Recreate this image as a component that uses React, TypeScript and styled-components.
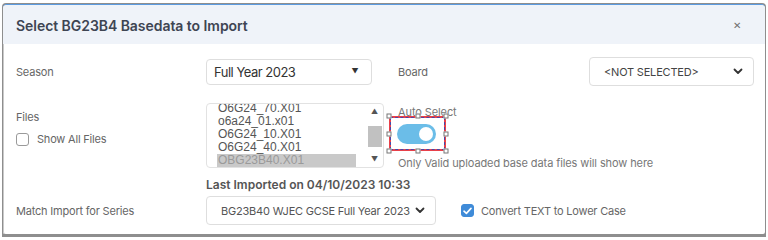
import React from "react";
import styled, { createGlobalStyle } from "styled-components";

const Global = createGlobalStyle`
  html, body { margin: 0; padding: 0; background: #ffffff; }
  body { font-family: Inter, "Noto Sans", sans-serif; }
  * { box-sizing: border-box; }
`;

const Backdrop = styled.div`
  width: 768px;
  height: 240px;
  background: #ffffff;
  padding: 3px 2px 0 2px;
  overflow: hidden;
`;

const Shade = styled.div`
  background: #8e8e8e;
  border-radius: 4px 4px 0 0;
  padding: 1px 1px 3px 1px;
  width: 764px;
`;

const Modal = styled.div`
  background: #ffffff;
  border-top: 1px solid #5b9be0;
  border-radius: 4px 4px 2px 2px;
  height: 230px;
  overflow: hidden;
  box-shadow: inset 1px 0 0 #c9c9c9;
`;

const Header = styled.div`
  height: 39px;
  background: #eff3f9;
  display: flex;
  align-items: center;
  justify-content: space-between;
  padding: 1px 24px 0 13px;
`;

const Title = styled.h1`
  margin: 0;
  font-size: 14px;
  font-weight: 600;
  color: #3e4553;
  letter-spacing: -0.05px;
`;

const Close = styled.span`
  font-size: 10px;
  color: #6f6f6f;
  line-height: 1;
`;

const Body = styled.div`
  padding: 13px 0 0 13px;
  display: flex;
  flex-direction: column;
`;

const Row = styled.div<{ $mt?: number; $h?: number }>`
  display: flex;
  align-items: center;
  margin-top: ${(p) => p.$mt ?? 0}px;
  height: ${(p) => (p.$h ? `${p.$h}px` : "auto")};
`;

const Label = styled.div<{ $w: number; $ml?: number }>`
  width: ${(p) => p.$w}px;
  margin-left: ${(p) => p.$ml ?? 0}px;
  flex: none;
  font-size: 11px;
  letter-spacing: -0.2px;
  color: #666;
  white-space: nowrap;
`;

const Select = styled.div<{ $w: number; $h: number; $fs: number; $ls: number; $pl: number; $color?: string }>`
  width: ${(p) => p.$w}px;
  height: ${(p) => p.$h}px;
  flex: none;
  border: 1px solid #dedede;
  border-radius: 4px;
  display: flex;
  align-items: center;
  justify-content: space-between;
  padding: 0 10px 0 ${(p) => p.$pl}px;
  font-size: ${(p) => p.$fs}px;
  letter-spacing: ${(p) => p.$ls}px;
  color: ${(p) => p.$color ?? "#333"};
  background: #fff;
  white-space: nowrap;
`;

const Caret = styled.span`
  font-size: 7px;
  color: #333;
  margin-right: 3px;
`;

const Chevron = () => (
  <svg width="10" height="7" viewBox="0 0 10 7">
    <path d="M1.5 1.5 L5 5 L8.5 1.5" fill="none" stroke="#333" strokeWidth="1.8" strokeLinecap="round" strokeLinejoin="round" />
  </svg>
);

const FilesCol = styled.div`
  width: 190px;
  flex: none;
  align-self: flex-start;
  padding-top: 7px;
  display: flex;
  flex-direction: column;
  gap: 8px;
`;

const CheckRow = styled.label`
  display: flex;
  align-items: center;
  gap: 8px;
  font-size: 11px;
  letter-spacing: -0.2px;
  color: #666;
  white-space: nowrap;
`;

const Box = styled.span<{ $checked?: boolean }>`
  width: 13px;
  height: 13px;
  border-radius: 3px;
  flex: none;
  border: 1px solid ${(p) => (p.$checked ? "#3f8bd8" : "#9a9a9a")};
  background: ${(p) => (p.$checked ? "#3f8bd8" : "#fff")};
  display: flex;
  align-items: center;
  justify-content: center;
`;

const ListBox = styled.div`
  width: 178px;
  height: 65px;
  flex: none;
  border: 1px solid #e2e2e2;
  border-radius: 4px;
  display: flex;
  overflow: hidden;
  align-self: flex-start;
`;

const Items = styled.div`
  flex: 1;
  padding: 0 10px 0 10px;
  margin-top: -2px;
`;

const Item = styled.div<{ $sel?: boolean }>`
  height: 13px;
  line-height: 13px;
  font-size: 12px;
  font-family: "Liberation Sans", Arial, sans-serif;
  color: ${(p) => (p.$sel ? "#9a9a9a" : "#555")};
  background: ${(p) => (p.$sel ? "#c9c9c9" : "transparent")};
  padding-left: 1px;
`;

const Scroll = styled.div`
  width: 17px;
  flex: none;
  display: flex;
  flex-direction: column;
  align-items: center;
  padding: 4px 0 3px;
  justify-content: space-between;
`;

const Thumb = styled.div`
  width: 14px;
  height: 21px;
  background: #c1c1c1;
`;

const Arrow = styled.span`
  font-size: 7px;
  color: #555;
  line-height: 8px;
`;

const AutoCol = styled.div`
  margin-left: 14px;
  padding-top: 2px;
  align-self: flex-start;
  display: flex;
  flex-direction: column;
`;

const SmallText = styled.div`
  font-size: 11px;
  letter-spacing: -0.1px;
  color: #777;
  line-height: 14px;
  white-space: nowrap;
`;

const ToggleWrap = styled.div`
  position: relative;
  width: 57px;
  height: 35px;
  margin: -3px 0 0 -9px;
  display: flex;
  align-items: center;
  padding-left: 8px;
`;

const SelFrame = styled.div`
  position: absolute;
  inset: 0;
  border: 2px solid #e8414a;
  &::after {
    content: "";
    position: absolute;
    inset: -1px;
    border: 1px dashed #4848a8;
  }
`;

const Handle = styled.span`
  position: absolute;
  width: 5px;
  height: 5px;
  background: #fff;
  border: 1px solid #777;
  transform: translate(-50%, -50%);
`;

const Pill = styled.div`
  width: 39px;
  height: 20px;
  border-radius: 10px;
  background: #6bbde8;
  display: flex;
  align-items: center;
  justify-content: flex-end;
  padding-right: 3px;
`;

const Knob = styled.div`
  width: 14px;
  height: 14px;
  border-radius: 50%;
  background: #fff;
`;

const Hint = styled(SmallText)`
  margin-top: 5px;
`;

const LastImported = styled.div`
  margin-left: 190px;
  font-size: 12px;
  font-weight: 600;
  color: #555;
`;

const ConvertRow = styled(CheckRow)`
  margin-left: 25px;
  gap: 7px;
`;

const handles: Array<[string, string]> = [
  ["0%", "0%"], ["50%", "0%"], ["100%", "0%"],
  ["0%", "50%"], ["100%", "50%"],
  ["0%", "100%"], ["50%", "100%"], ["100%", "100%"],
];

export default function App() {
  return (
    <>
      <Global />
      <Backdrop>
        <Shade>
          <Modal>
            <Header>
              <Title>Select BG23B4 Basedata to Import</Title>
              <Close>✕</Close>
            </Header>
            <Body>
              <Row $h={29}>
                <Label $w={190}>Season</Label>
                <Select $w={166} $h={26} $fs={13} $ls={-0.5} $pl={7}>
                  Full Year 2023
                  <Caret>▼</Caret>
                </Select>
                <Label $w={191} $ml={26}>Board</Label>
                <Select $w={165} $h={29} $fs={11} $ls={-0.2} $pl={14} $color="#444">
                  &lt;NOT SELECTED&gt;
                  <Chevron />
                </Select>
              </Row>
              <Row $mt={17}>
                <FilesCol>
                  <Label $w={190}>Files</Label>
                  <CheckRow>
                    <Box />
                    Show All Files
                  </CheckRow>
                </FilesCol>
                <ListBox>
                  <Items>
                    <Item>O6G24_70.X01</Item>
                    <Item>o6a24_01.x01</Item>
                    <Item>O6G24_10.X01</Item>
                    <Item>O6G24_40.X01</Item>
                    <Item $sel>OBG23B40.X01</Item>
                  </Items>
                  <Scroll>
                    <Arrow>▲</Arrow>
                    <Thumb />
                    <Arrow>▼</Arrow>
                  </Scroll>
                </ListBox>
                <AutoCol>
                  <SmallText>Auto Select</SmallText>
                  <ToggleWrap>
                    <SelFrame />
                    {handles.map(([l, t], i) => (
                      <Handle key={i} style={{ left: l, top: t }} />
                    ))}
                    <Pill>
                      <Knob />
                    </Pill>
                  </ToggleWrap>
                  <Hint>Only Valid uploaded base data files will show here</Hint>
                </AutoCol>
              </Row>
              <Row $mt={7}>
                <LastImported>Last Imported on 04/10/2023 10:33</LastImported>
              </Row>
              <Row $mt={4} $h={29}>
                <Label $w={190}>Match Import for Series</Label>
                <Select $w={230} $h={29} $fs={11} $ls={-0.2} $pl={14} $color="#555">
                  BG23B40 WJEC GCSE Full Year 2023
                  <Chevron />
                </Select>
                <ConvertRow>
                  <Box $checked>
                    <svg width="9" height="8" viewBox="0 0 9 8">
                      <path d="M1 4.2 L3.4 6.4 L8 1.4" fill="none" stroke="#fff" strokeWidth="1.6" strokeLinecap="round" strokeLinejoin="round" />
                    </svg>
                  </Box>
                  Convert TEXT to Lower Case
                </ConvertRow>
              </Row>
            </Body>
          </Modal>
        </Shade>
      </Backdrop>
    </>
  );
}
